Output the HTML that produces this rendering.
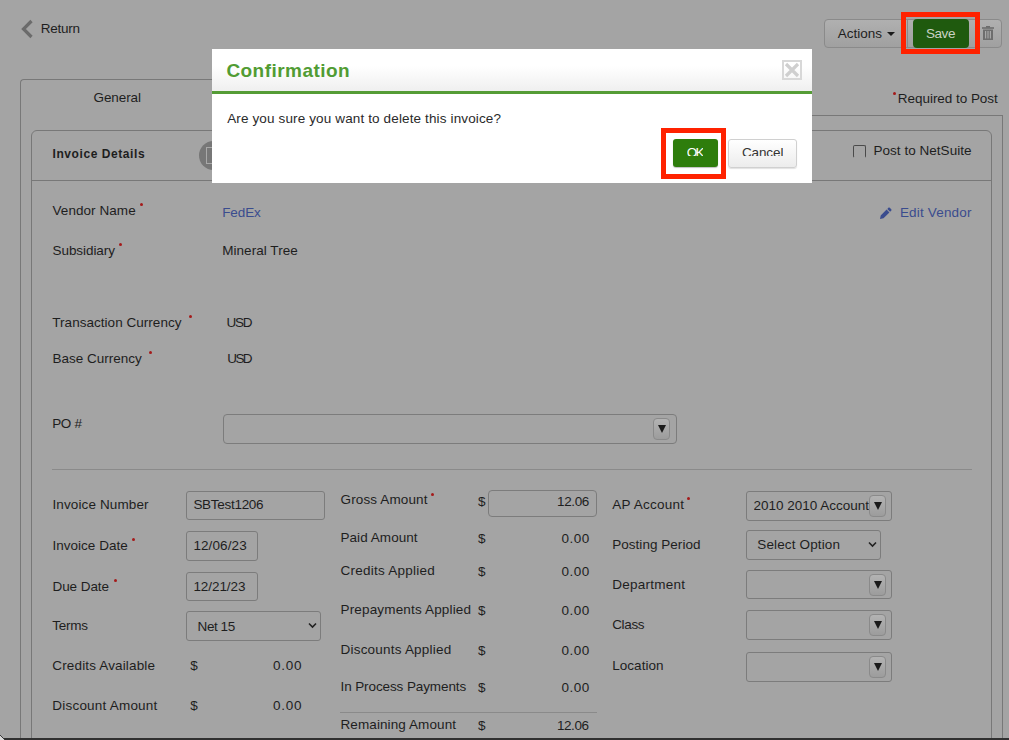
<!DOCTYPE html>
<html><head><meta charset="utf-8"><style>
html,body{margin:0;padding:0;}
body{width:1009px;height:740px;overflow:hidden;position:relative;background:#a4a4a4;font-family:"Liberation Sans",sans-serif;color:#1e1e1e;}
.t{position:absolute;white-space:nowrap;z-index:5;}
.b{position:absolute;}
.chev{position:absolute;}
.star{position:absolute;width:3px;height:3px;background:#a51a1a;border-radius:50%;}
.dd{position:absolute;width:17px;height:22px;box-sizing:border-box;border:1px solid #8a8a8a;border-radius:4px;background:linear-gradient(#b3b3b3,#9c9c9c);}
.tri{position:absolute;width:0;height:0;border-left:4px solid transparent;border-right:4px solid transparent;border-top:8px solid #1a1a1a;}
.modal{position:absolute;left:212px;top:49px;width:600px;height:134px;background:#fff;z-index:10;}
.mh{position:absolute;left:0;top:0;width:600px;height:42px;background:linear-gradient(#ffffff 40%,#efefef);}
.ml{position:absolute;left:0;top:42px;width:600px;height:3px;background:#559c36;}
.closebox{position:absolute;left:570px;top:11px;width:20px;height:20px;box-sizing:border-box;border:2px solid #d8d8d8;}
.okbtn{position:absolute;left:461px;top:90px;width:45px;height:28px;background:#2e7d0c;border-radius:3px;box-shadow:0 1px 1px rgba(0,0,0,.25);}
.cbtn{position:absolute;left:516px;top:90px;width:69px;height:29px;box-sizing:border-box;border:1px solid #d0d0d0;border-radius:3px;background:linear-gradient(#ffffff,#ececec);box-shadow:0 1px 1px rgba(0,0,0,.12);}
.redok{position:absolute;left:449px;top:79px;width:65px;height:51px;box-sizing:border-box;border:5px solid #ff2200;}
.mt{z-index:20;}
</style></head><body>
<div class="b" style="left:20px;top:79px;width:500px;height:700px;border-top:1px solid #787878;border-left:1px solid #787878;border-radius:4px 0 0 0;"></div><div class="b" style="left:520px;top:115px;width:482px;height:700px;border-top:1px solid #787878;border-right:1px solid #787878;"></div><div class="b" style="left:31px;top:130px;width:959px;height:700px;border:1px solid #787878;border-radius:6px 6px 0 0;"></div><div class="b" style="left:32px;top:180px;width:959px;height:0px;border-top:1px solid #787878;"></div><div class="b" style="left:199px;top:141px;width:29px;height:29px;background:#777;border-radius:50%;"></div><div class="b" style="left:206px;top:147px;width:14px;height:17px;border:1.5px solid #a9a9a9;box-sizing:border-box;"></div><div class="b" style="left:52px;top:469px;width:920px;height:0px;border-top:1px solid #8a8a8a;"></div><div class="b" style="left:340px;top:712px;width:257px;height:0px;border-top:1px solid #8a8a8a;"></div><div class="b" style="left:223px;top:414px;width:454px;height:30px;border:1px solid #7c7c7c;border-radius:4px;box-sizing:border-box;"></div><div class="dd" style="left:653px;top:418px"></div><div class="tri" style="left:657.5px;top:424.5px"></div><div class="b" style="left:186px;top:491px;width:139px;height:29px;border:1px solid #7c7c7c;border-radius:3px;box-sizing:border-box;"></div><div class="b" style="left:186px;top:531px;width:72px;height:30px;border:1px solid #7c7c7c;border-radius:3px;box-sizing:border-box;"></div><div class="b" style="left:186px;top:572px;width:72px;height:29px;border:1px solid #7c7c7c;border-radius:3px;box-sizing:border-box;"></div><div class="b" style="left:186px;top:611px;width:135px;height:30px;border:1px solid #7c7c7c;border-radius:3px;box-sizing:border-box;"></div><svg class="chev" style="left:308px;top:622px" width="9" height="7" viewBox="0 0 9 7"><path d="M1 1.5 L4.5 5 L8 1.5" fill="none" stroke="#222" stroke-width="1.6"/></svg><div class="b" style="left:488px;top:490px;width:109px;height:27px;border:1px solid #7c7c7c;border-radius:4px;box-sizing:border-box;"></div><div class="b" style="left:746px;top:491px;width:146px;height:30px;border:1px solid #7c7c7c;border-radius:3px;box-sizing:border-box;"></div><div class="b" style="left:746px;top:570px;width:146px;height:29px;border:1px solid #7c7c7c;border-radius:3px;box-sizing:border-box;"></div><div class="b" style="left:746px;top:610px;width:146px;height:30px;border:1px solid #7c7c7c;border-radius:3px;box-sizing:border-box;"></div><div class="b" style="left:746px;top:652px;width:146px;height:30px;border:1px solid #7c7c7c;border-radius:3px;box-sizing:border-box;"></div><div class="b" style="left:746px;top:530px;width:135px;height:30px;border:1px solid #7c7c7c;border-radius:3px;box-sizing:border-box;"></div><svg class="chev" style="left:868px;top:541px" width="9" height="7" viewBox="0 0 9 7"><path d="M1 1.5 L4.5 5 L8 1.5" fill="none" stroke="#222" stroke-width="1.6"/></svg><div class="dd" style="left:869px;top:495px"></div><div class="tri" style="left:873.5px;top:501.5px"></div><div class="dd" style="left:869px;top:574px"></div><div class="tri" style="left:873.5px;top:580.5px"></div><div class="dd" style="left:869px;top:614px"></div><div class="tri" style="left:873.5px;top:620.5px"></div><div class="dd" style="left:869px;top:656px"></div><div class="tri" style="left:873.5px;top:662.5px"></div><svg class="chev" style="left:879px;top:207px" width="13" height="13" viewBox="0 0 13 13"><path d="M1 12 L1.7 8.5 L7.6 2.6 L10.4 5.4 L4.5 11.3 Z M8.3 1.9 L9.6 0.6 Q10.2 0.2 10.8 0.8 L12.2 2.2 Q12.8 2.8 12.4 3.4 L11.1 4.7 Z" fill="#3a4c8e"/></svg><div class="b" style="left:853px;top:145px;width:13px;height:13px;border:1px solid #4a4a4a;border-radius:2px;box-sizing:border-box;border-bottom-color:transparent;"></div><svg class="chev" style="left:20px;top:19px" width="14" height="20" viewBox="0 0 14 20"><path d="M11.5 2 L3.5 10 L11.5 18" fill="none" stroke="#6b6b6b" stroke-width="3.2"/></svg><div class="b" style="left:824px;top:19px;width:178px;height:29px;border:1px solid #8a8a8a;border-radius:4px;box-sizing:border-box;background:linear-gradient(#b0b0b0,#a0a0a0);"></div><div class="b" style="left:907px;top:19px;width:0px;height:29px;border-left:1px solid #8a8a8a;"></div><div class="b" style="left:887px;top:31.5px;width:0;height:0;border-left:4px solid transparent;border-right:4px solid transparent;border-top:4.5px solid #1a1a1a;"></div><div class="b" style="left:913px;top:19px;width:56px;height:29px;background:#1f5a0e;border-radius:4px;"></div><svg class="chev" style="left:982px;top:26px" width="12" height="14" viewBox="0 0 12 14"><rect x="0" y="1.2" width="12" height="1.6" fill="#6d6d6d"/><rect x="4" y="0" width="4" height="1.6" fill="#6d6d6d"/><path d="M1 3.5 H11 V14 H1 Z M3 5 V12.5 H4.2 V5 Z M5.4 5 V12.5 H6.6 V5 Z M7.8 5 V12.5 H9 V5 Z" fill="#6d6d6d" fill-rule="evenodd"/></svg><div class="b" style="left:901px;top:12px;width:79px;height:42px;border:5px solid #ff2200;box-sizing:border-box;"></div><div class="star" style="left:893px;top:92px"></div><div class="star" style="left:140px;top:203px"></div><div class="star" style="left:119px;top:243px"></div><div class="star" style="left:189px;top:315px"></div><div class="star" style="left:149px;top:351px"></div><div class="star" style="left:132px;top:538px"></div><div class="star" style="left:114px;top:579px"></div><div class="star" style="left:431px;top:493px"></div><div class="star" style="left:687px;top:497px"></div><div class="b" style="left:0px;top:738px;width:1009px;height:2px;background:#303030;"></div><svg class="chev" style="left:0;top:733px;z-index:30" width="8" height="7" viewBox="0 0 8 7"><path d="M0 2 L5 7 L0 7 Z" fill="#d9d9d9"/><path d="M0 2 L5 7" stroke="#3a3a3a" stroke-width="1"/></svg>

<div class="modal">
  <div class="mh"></div>
  <div class="ml"></div>
  <div class="closebox"></div>
  <svg class="chev" style="left:572px;top:13px" width="16" height="16" viewBox="0 0 16 16"><path d="M2 2 L14 14 M14 2 L2 14" stroke="#cfcfcf" stroke-width="3.2"/></svg>
  <div class="okbtn"></div>
  <div class="cbtn"></div>
  <div class="redok"></div>
</div>

<div class="t" id="t0" style="left:40.8px;top:22px;font-size:13.5px;line-height:14px;letter-spacing:-0.266px;">Return</div>
<div class="t" id="t1" style="left:837.7px;top:27px;font-size:13.5px;line-height:14px;letter-spacing:0.020px;">Actions</div>
<div class="t" id="t2" style="left:926px;top:27px;font-size:13.5px;line-height:14px;color:#c9d2c4;letter-spacing:-0.460px;">Save</div>
<div class="t" id="t3" style="left:93.6px;top:91px;font-size:13.5px;line-height:14px;letter-spacing:-0.122px;">General</div>
<div class="t" id="t4" style="left:897.8px;top:92px;font-size:13.5px;line-height:14px;letter-spacing:-0.037px;">Required to Post</div>
<div class="t" id="t5" style="left:52.5px;top:147px;font-size:12px;line-height:14px;font-weight:bold;letter-spacing:0.575px;">Invoice Details</div>
<div class="t" id="t6" style="left:873.5px;top:144px;font-size:13.5px;line-height:14px;letter-spacing:0.029px;">Post to NetSuite</div>
<div class="t" id="t7" style="left:226.4px;top:61px;font-size:19px;line-height:20px;color:#519c33;font-weight:bold;letter-spacing:0.453px;z-index:20;">Confirmation</div>
<div class="t" id="t8" style="left:227.2px;top:112px;font-size:13.5px;line-height:14px;color:#2a2a2a;letter-spacing:0.134px;z-index:20;">Are you sure you want to delete this invoice?</div>
<div class="t" id="t9" style="left:686.7px;top:146px;font-size:13.5px;line-height:14px;color:#ffffff;letter-spacing:-1.716px;z-index:20;height:10px;overflow:hidden;">OK</div>
<div class="t" id="t10" style="left:741.9px;top:146px;font-size:13.5px;line-height:14px;color:#333333;letter-spacing:-0.106px;z-index:20;height:10px;overflow:hidden;">Cancel</div>
<div class="t" id="t11" style="left:899.9px;top:206px;font-size:13.5px;line-height:14px;color:#3a4c8e;letter-spacing:0.179px;">Edit Vendor</div>
<div class="t" id="t12" style="left:52.5px;top:204px;font-size:13.5px;line-height:14px;letter-spacing:0.064px;">Vendor Name</div>
<div class="t" id="t13" style="left:222.2px;top:206px;font-size:13.5px;line-height:14px;color:#3a4c8e;letter-spacing:-0.108px;">FedEx</div>
<div class="t" id="t14" style="left:52.5px;top:244px;font-size:13.5px;line-height:14px;letter-spacing:-0.059px;">Subsidiary</div>
<div class="t" id="t15" style="left:222.2px;top:244px;font-size:13.5px;line-height:14px;letter-spacing:0.052px;">Mineral Tree</div>
<div class="t" id="t16" style="left:52.3px;top:316px;font-size:13.5px;line-height:14px;letter-spacing:0.034px;">Transaction Currency</div>
<div class="t" id="t17" style="left:226.5px;top:316px;font-size:13.5px;line-height:14px;letter-spacing:-1.208px;">USD</div>
<div class="t" id="t18" style="left:52.5px;top:352px;font-size:13.5px;line-height:14px;letter-spacing:0.000px;">Base Currency</div>
<div class="t" id="t19" style="left:227.3px;top:352px;font-size:13.5px;line-height:14px;letter-spacing:-1.608px;">USD</div>
<div class="t" id="t20" style="left:52.2px;top:417px;font-size:13.5px;line-height:14px;letter-spacing:-0.322px;">PO #</div>
<div class="t" id="t21" style="left:52.5px;top:498px;font-size:13.5px;line-height:14px;letter-spacing:0.112px;">Invoice Number</div>
<div class="t" id="t22" style="left:193.4px;top:498px;font-size:13.5px;line-height:14px;letter-spacing:-0.290px;">SBTest1206</div>
<div class="t" id="t23" style="left:52.5px;top:539px;font-size:13.5px;line-height:14px;letter-spacing:0.014px;">Invoice Date</div>
<div class="t" id="t24" style="left:193.4px;top:539px;font-size:13.5px;line-height:14px;letter-spacing:0.105px;">12/06/23</div>
<div class="t" id="t25" style="left:52.5px;top:580px;font-size:13.5px;line-height:14px;letter-spacing:-0.078px;">Due Date</div>
<div class="t" id="t26" style="left:193.4px;top:580px;font-size:13.5px;line-height:14px;letter-spacing:-0.066px;">12/21/23</div>
<div class="t" id="t27" style="left:52.3px;top:619px;font-size:13.5px;line-height:14px;letter-spacing:-0.262px;">Terms</div>
<div class="t" id="t28" style="left:197.6px;top:620px;font-size:13.5px;line-height:14px;letter-spacing:-0.436px;">Net 15</div>
<div class="t" id="t29" style="left:52.3px;top:659px;font-size:13.5px;line-height:14px;letter-spacing:0.149px;">Credits Available</div>
<div class="t" id="t30" style="left:190.2px;top:659px;font-size:13.5px;line-height:14px;letter-spacing:0.000px;">$</div>
<div class="t" id="t31" style="left:273px;top:659px;font-size:13.5px;line-height:14px;letter-spacing:0.706px;">0.00</div>
<div class="t" id="t32" style="left:52.3px;top:699px;font-size:13.5px;line-height:14px;letter-spacing:0.210px;">Discount Amount</div>
<div class="t" id="t33" style="left:190.2px;top:699px;font-size:13.5px;line-height:14px;letter-spacing:0.000px;">$</div>
<div class="t" id="t34" style="left:273px;top:699px;font-size:13.5px;line-height:14px;letter-spacing:0.706px;">0.00</div>
<div class="t" id="t35" style="left:340.5px;top:493px;font-size:13.5px;line-height:14px;letter-spacing:0.132px;">Gross Amount</div>
<div class="t" id="t36" style="left:478px;top:495px;font-size:13.5px;line-height:14px;letter-spacing:0.000px;">$</div>
<div class="t" id="t37" style="left:557.1px;top:495px;font-size:13.5px;line-height:14px;letter-spacing:-0.399px;">12.06</div>
<div class="t" id="t38" style="left:340.5px;top:531px;font-size:13.5px;line-height:14px;letter-spacing:0.054px;">Paid Amount</div>
<div class="t" id="t39" style="left:478px;top:532px;font-size:13.5px;line-height:14px;letter-spacing:0.000px;">$</div>
<div class="t" id="t40" style="left:561.6px;top:532px;font-size:13.5px;line-height:14px;letter-spacing:0.473px;">0.00</div>
<div class="t" id="t41" style="left:340.5px;top:564px;font-size:13.5px;line-height:14px;letter-spacing:0.249px;">Credits Applied</div>
<div class="t" id="t42" style="left:478px;top:565px;font-size:13.5px;line-height:14px;letter-spacing:0.000px;">$</div>
<div class="t" id="t43" style="left:561.6px;top:565px;font-size:13.5px;line-height:14px;letter-spacing:0.473px;">0.00</div>
<div class="t" id="t44" style="left:340.5px;top:603px;font-size:13.5px;line-height:14px;letter-spacing:0.162px;">Prepayments Applied</div>
<div class="t" id="t45" style="left:478px;top:604px;font-size:13.5px;line-height:14px;letter-spacing:0.000px;">$</div>
<div class="t" id="t46" style="left:561.6px;top:604px;font-size:13.5px;line-height:14px;letter-spacing:0.473px;">0.00</div>
<div class="t" id="t47" style="left:340.5px;top:643px;font-size:13.5px;line-height:14px;letter-spacing:0.211px;">Discounts Applied</div>
<div class="t" id="t48" style="left:478px;top:644px;font-size:13.5px;line-height:14px;letter-spacing:0.000px;">$</div>
<div class="t" id="t49" style="left:561.6px;top:644px;font-size:13.5px;line-height:14px;letter-spacing:0.473px;">0.00</div>
<div class="t" id="t50" style="left:340.5px;top:680px;font-size:13.5px;line-height:14px;letter-spacing:-0.103px;">In Process Payments</div>
<div class="t" id="t51" style="left:478px;top:681px;font-size:13.5px;line-height:14px;letter-spacing:0.000px;">$</div>
<div class="t" id="t52" style="left:561.6px;top:681px;font-size:13.5px;line-height:14px;letter-spacing:0.473px;">0.00</div>
<div class="t" id="t53" style="left:340.5px;top:718px;font-size:13.5px;line-height:14px;letter-spacing:0.095px;">Remaining Amount</div>
<div class="t" id="t54" style="left:478px;top:719px;font-size:13.5px;line-height:14px;letter-spacing:0.000px;">$</div>
<div class="t" id="t55" style="left:557px;top:719px;font-size:13.5px;line-height:14px;letter-spacing:-0.449px;">12.06</div>
<div class="t" id="t56" style="left:612.2px;top:498px;font-size:13.5px;line-height:14px;letter-spacing:0.238px;">AP Account</div>
<div class="t" id="t57" style="left:753.5px;top:499px;font-size:13.5px;line-height:14px;width:115.5px;overflow:hidden;white-space:nowrap;">2010 2010 Account</div>
<div class="t" id="t58" style="left:612.2px;top:538px;font-size:13.5px;line-height:14px;letter-spacing:0.037px;">Posting Period</div>
<div class="t" id="t59" style="left:757.3px;top:538px;font-size:13.5px;line-height:14px;letter-spacing:0.138px;">Select Option</div>
<div class="t" id="t60" style="left:612.2px;top:578px;font-size:13.5px;line-height:14px;letter-spacing:0.261px;">Department</div>
<div class="t" id="t61" style="left:612.2px;top:618px;font-size:13.5px;line-height:14px;letter-spacing:-0.341px;">Class</div>
<div class="t" id="t62" style="left:612.2px;top:659px;font-size:13.5px;line-height:14px;letter-spacing:0.050px;">Location</div>
</body></html>
